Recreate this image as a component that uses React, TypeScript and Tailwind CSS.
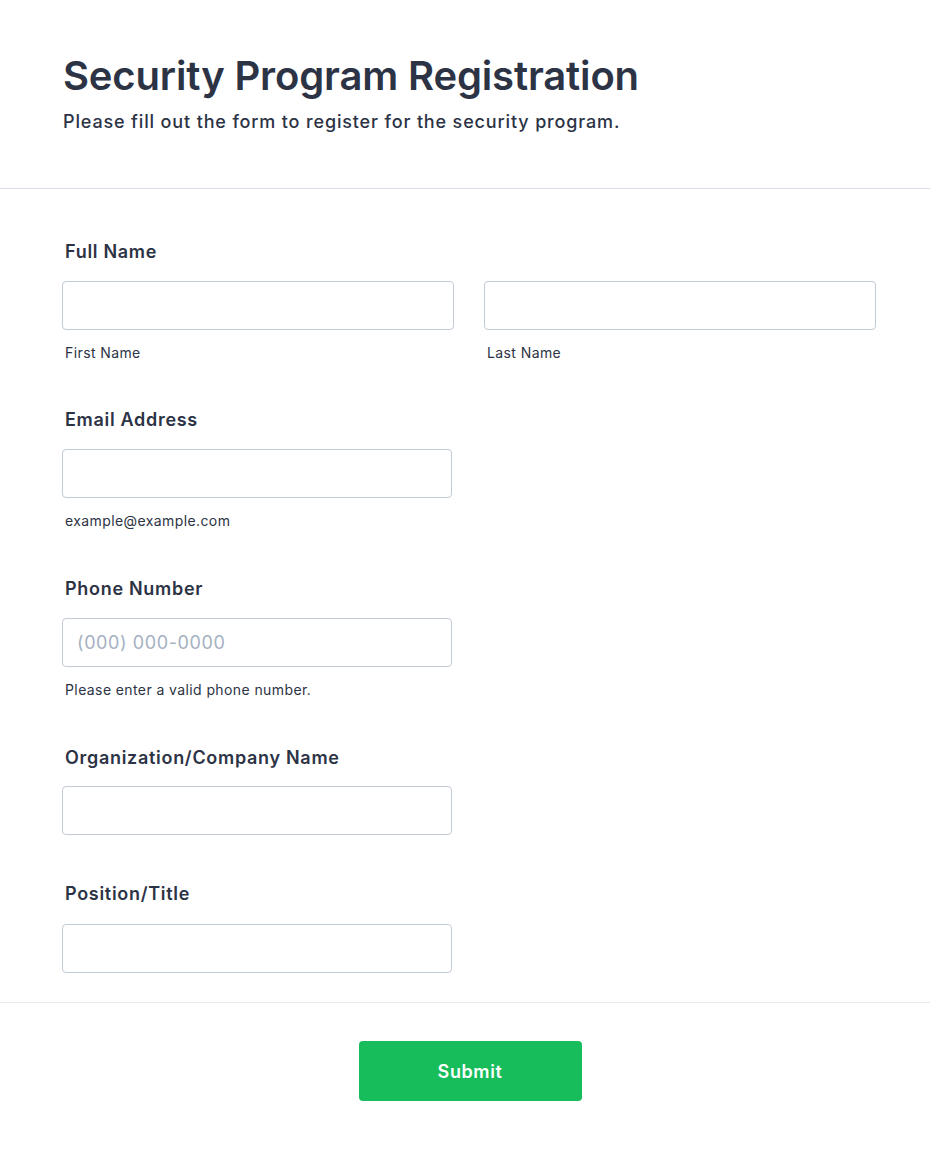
import React from "react";

const font = { fontFamily: "Inter, 'Noto Sans', sans-serif" };

function Label({ children, className = "" }: { children: React.ReactNode; className?: string }) {
  return (
    <div className={"pl-[3px] text-[18px] font-semibold leading-[24px] tracking-[0.7px] text-[#2c3345] " + className}>
      {children}
    </div>
  );
}

function Input({ placeholder, className = "" }: { placeholder?: string; className?: string }) {
  return (
    <input
      type="text"
      placeholder={placeholder}
      className={
        "h-[49px] rounded-[4px] border border-[#c3cad8] bg-white px-[14px] text-[18px] tracking-[0.6px] text-[#2c3345] outline-none placeholder:text-[#a5b0c2] " +
        className
      }
      style={font}
    />
  );
}

function Sub({ children }: { children: React.ReactNode }) {
  return <div className="mt-[13px] pl-[3px] text-[14px] leading-[20px] tracking-[0.4px] text-[#2c3345]">{children}</div>;
}

export default function App() {
  return (
    <div className="min-h-[1149px] w-full bg-white" style={font}>
      <header className="px-[63px] pt-[50px] pb-[54px]">
        <h1 className="text-[40px] font-semibold leading-[52px] tracking-[-0.15px] text-[#2c3345]">
          Security Program Registration
        </h1>
        <p className="mt-[8px] text-[18px] font-medium leading-[24px] tracking-[0.85px] text-[#2c3345]">
          Please fill out the form to register for the security program.
        </p>
      </header>
      <div className="h-px bg-[#dedeeb]" />
      <main className="pl-[62px] pr-[54px] pt-[51px]">
        <section>
          <Label>Full Name</Label>
          <div className="mt-[17px] grid grid-cols-2 gap-[30px]">
            <div className="flex flex-col">
              <Input />
              <Sub>First Name</Sub>
            </div>
            <div className="flex flex-col">
              <Input />
              <Sub>Last Name</Sub>
            </div>
          </div>
        </section>
        <section className="mt-[45px]">
          <Label>Email Address</Label>
          <div className="mt-[17px] flex flex-col">
            <Input className="w-[390px]" />
            <Sub>example@example.com</Sub>
          </div>
        </section>
        <section className="mt-[46px]">
          <Label>Phone Number</Label>
          <div className="mt-[17px] flex flex-col">
            <Input className="w-[390px]" placeholder="(000) 000-0000" />
            <Sub>Please enter a valid phone number.</Sub>
          </div>
        </section>
        <section className="mt-[46px]">
          <Label>Organization/Company Name</Label>
          <div className="mt-[16px] flex flex-col">
            <Input className="w-[390px]" />
          </div>
        </section>
        <section className="mt-[47px]">
          <Label>Position/Title</Label>
          <div className="mt-[18px] flex flex-col">
            <Input className="w-[390px]" />
          </div>
        </section>
      </main>
      <div className="mt-[29px] h-px bg-[#e6e9f0]" />
      <div className="flex justify-center pt-[38px]">
        <button
          type="button"
          className="ml-[10px] h-[60px] w-[223px] rounded-[4px] bg-[#18bd5b] text-[18px] font-semibold tracking-[0.6px] text-white"
          style={font}
        >
          Submit
        </button>
      </div>
    </div>
  );
}
